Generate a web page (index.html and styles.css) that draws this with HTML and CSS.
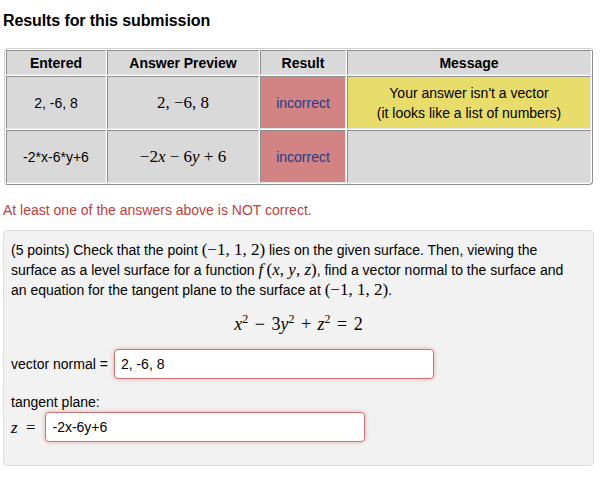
FILE: index.html
```html
<!DOCTYPE html>
<html lang="en">
<head>
    <meta charset="UTF-8">
    <title>Results for this submission</title>
    <link rel="stylesheet" href="styles.css">
</head>
<body>

    <!-- Attempt results -->
    <h2 class="results-title">Results for this submission</h2>

    <table class="attempt-results">
        <tr>
            <th class="col-entered">Entered</th>
            <th class="col-preview">Answer Preview</th>
            <th class="col-result">Result</th>
            <th class="col-message">Message</th>
        </tr>
        <tr>
            <td>2, -6, 8</td>
            <td class="preview"><span class="math">2, &minus;6, 8</span></td>
            <td class="result-bad">incorrect</td>
            <td class="message-warn">Your answer isn't a vector<br>(it looks like a list of numbers)</td>
        </tr>
        <tr>
            <td>-2*x-6*y+6</td>
            <td class="preview"><span class="math">&minus;2<i>x</i> &minus; 6<i>y</i> + 6</span></td>
            <td class="result-bad">incorrect</td>
            <td></td>
        </tr>
    </table>

    <div class="result-summary">At least one of the answers above is NOT correct.</div>

    <!-- Problem body -->
    <div class="problem">
        <p class="problem-text">
            (5 points) Check that the point <span class="math">(&minus;1, 1, 2)</span> lies on the given surface. Then, viewing the
            surface as a level surface for a function <span class="math"><i>f</i>&thinsp;(<i>x</i>, <i>y</i>, <i>z</i>)</span>, find a vector normal to the surface and
            an equation for the tangent plane to the surface at <span class="math">(&minus;1, 1, 2)</span>.
        </p>

        <div class="display-math">
            <span class="math"><i>x</i><sup>2</sup> &minus; 3<i>y</i><sup>2</sup> + <i>z</i><sup>2</sup> = 2</span>
        </div>

        <div class="answer-row">
            <label>vector normal =</label>
            <input type="text" class="answer-input incorrect" value="2, -6, 8">
        </div>

        <div class="answer-label">tangent plane:</div>
        <div class="answer-row tight">
            <span class="math eq-lhs"><i>z</i> =</span>
            <input type="text" class="answer-input incorrect" value="-2x-6y+6">
        </div>
    </div>

</body>
</html>
```

FILE: styles.css
```css
/* General reset */
* {
    box-sizing: border-box;
}

body {
    margin: 0;
    padding: 0 3px;
    font-family: "Liberation Sans", Arial, sans-serif;
    font-size: 14px;
    color: #000;
    background: #fff;
}

/* Math text */
.math {
    font-family: "Liberation Serif", "Times New Roman", serif;
    font-size: 17px;
    line-height: 1;
}

.math sup {
    font-size: 11px;
    vertical-align: 7px;
    line-height: 0;
}

/* Title */
.results-title {
    margin: 0;
    padding-top: 12px;
    font-size: 16px;
    font-weight: bold;
    line-height: 18px;
    letter-spacing: -0.1px;
}

/* Results table */
.attempt-results {
    margin: 18px 0 0 1px;
    width: 589px;
    border: 1px solid;
    border-color: #d0d0d0 #8e8e8e #8e8e8e #d0d0d0;
    border-radius: 4px;
    border-spacing: 1px;
    table-layout: fixed;
}

.attempt-results th,
.attempt-results td {
    background-color: #d9d9d9;
    border: 1px solid;
    border-color: #8e8e8e #e4e4e4 #e4e4e4 #8e8e8e;
    text-align: center;
    padding: 0 4px;
}

.attempt-results th {
    height: 25px;
    font-weight: bold;
}

.attempt-results td {
    height: 53px;
    line-height: 20px;
}

.col-entered { width: 100px; }
.col-preview { width: 152px; }
.col-result { width: 86px; }

.attempt-results td.result-bad {
    background-color: #d28383;
    color: #1f3c8c;
}

.attempt-results td.message-warn {
    background-color: #e8dc6b;
}

/* Summary */
.result-summary {
    margin-top: 17px;
    color: #c0403c;
    line-height: 16px;
}

/* Problem box */
.problem {
    margin-top: 12px;
    width: 591px;
    background-color: #f2f2f2;
    border: 1px solid #dcdcdc;
    border-radius: 4px;
    padding: 9px 20px 23px 7px;
}

.problem-text {
    margin: 0;
    line-height: 20px;
}

.display-math {
    text-align: center;
    margin: 13px -13px 0 0;
    line-height: 24px;
    height: 24px;
}

.display-math .math {
    font-size: 18px;
    word-spacing: 2px;
}

.display-math sup {
    font-size: 12px;
}

.answer-row {
    display: flex;
    align-items: center;
    gap: 6px;
    margin-top: 12px;
}

.answer-row.tight {
    margin-top: 1px;
    gap: 10px;
}

.eq-lhs {
    word-spacing: 4px;
}

.answer-label {
    margin-top: 14px;
    line-height: 18px;
}

.answer-input {
    width: 320px;
    height: 30px;
    padding: 0 6px;
    font-family: "Liberation Sans", Arial, sans-serif;
    font-size: 14px;
    color: #000;
    background: #fff;
    border: 1px solid #ccc;
    border-radius: 4px;
}

.answer-input.incorrect {
    border-color: #d07575;
    box-shadow: 0 0 4px rgba(205, 80, 80, 0.45);
}
```
